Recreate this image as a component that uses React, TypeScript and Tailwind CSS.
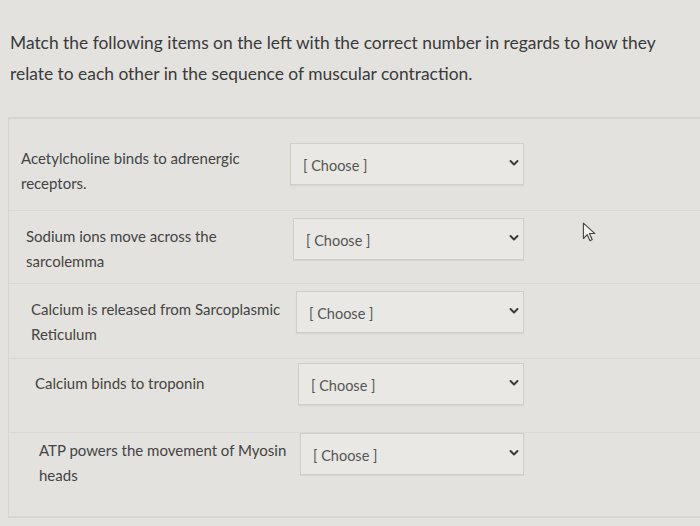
import React from "react";

const rows = [
  { text: "Acetylcholine binds to adrenergic receptors.", pl: "pl-[12px]", sl: "ml-[11px]", sw: "w-[234px]", h: "h-[92px]", pt: "pt-[24px]", tp: "pt-[3px]" },
  { text: "Sodium ions move across the sarcolemma", pl: "pl-[17px]", sl: "ml-[9px]", sw: "w-[231px]", h: "h-[73px]", pt: "pt-[7px]", tp: "pt-[6px]" },
  { text: "Calcium is released from Sarcoplasmic Reticulum", pl: "pl-[22px]", sl: "ml-[7px]", sw: "w-[228px]", h: "h-[75px]", pt: "pt-[7px]", tp: "pt-[6px]" },
  { text: "Calcium binds to troponin", pl: "pl-[26px]", sl: "ml-[5px]", sw: "w-[226px]", h: "h-[74px]", pt: "pt-[4px]", tp: "pt-[8px]" },
  { text: "ATP powers the movement of Myosin heads", pl: "pl-[30px]", sl: "ml-[3px]", sw: "w-[224px]", h: "h-[83px]", pt: "pt-[0px]", tp: "pt-[5px]" },
];

function Chevron() {
  return (
    <svg width="10" height="8" viewBox="0 0 10 8" className="shrink-0 -mt-[2px]">
      <path d="M1.5 2 L5 5.5 L8.5 2" fill="none" stroke="#3b3b3b" strokeWidth="2" strokeLinecap="round" strokeLinejoin="round" />
    </svg>
  );
}

export default function App() {
  return (
    <div className="w-[700px] h-[526px] overflow-hidden bg-[#e3e2de] relative" style={{ fontFamily: "Lato, 'Open Sans', sans-serif" }}>
      <div className="pt-[27px] pl-[10px] pr-[20px] text-[17.4px] leading-[31px] text-[#3a3a3a]">
        Match the following items on the left with the correct number in regards to how they relate to each other in the sequence of muscular contraction.
      </div>
      <div className="mt-[28px] ml-[8px] border-t-2 border-l border-b-2 border-[#d6d5d1]">
        {rows.map((r, i) => (
          <div key={i} className={`${r.h} ${r.pt} ${r.pl} flex items-start ${i < rows.length - 1 ? "border-b border-[#d9d8d4]" : ""}`}>
            <div className={`w-[258px] shrink-0 text-[15px] leading-[25px] text-[#444444] ${r.tp}`}>{r.text}</div>
            <div className={`${r.sl} ${r.sw} h-[42px] border border-[#cfceca] bg-[#e9e8e4] shadow-[0_1px_1px_rgba(0,0,0,0.06)] flex items-center justify-between pl-[12px] pr-[4px]`}>
              <span className="text-[14.5px] text-[#555555] mt-[4px]">[ Choose ]</span>
              <Chevron />
            </div>
          </div>
        ))}
      </div>
      <svg className="absolute left-[582px] top-[222px]" width="16" height="22" viewBox="0 0 14 20">
        <path d="M1 1 L1 15 L4.5 11.5 L7 17 L9 16 L6.5 10.5 L11.5 10.5 Z" fill="#f2f2f0" stroke="#444" strokeWidth="1" strokeLinejoin="round" />
      </svg>
    </div>
  );
}
